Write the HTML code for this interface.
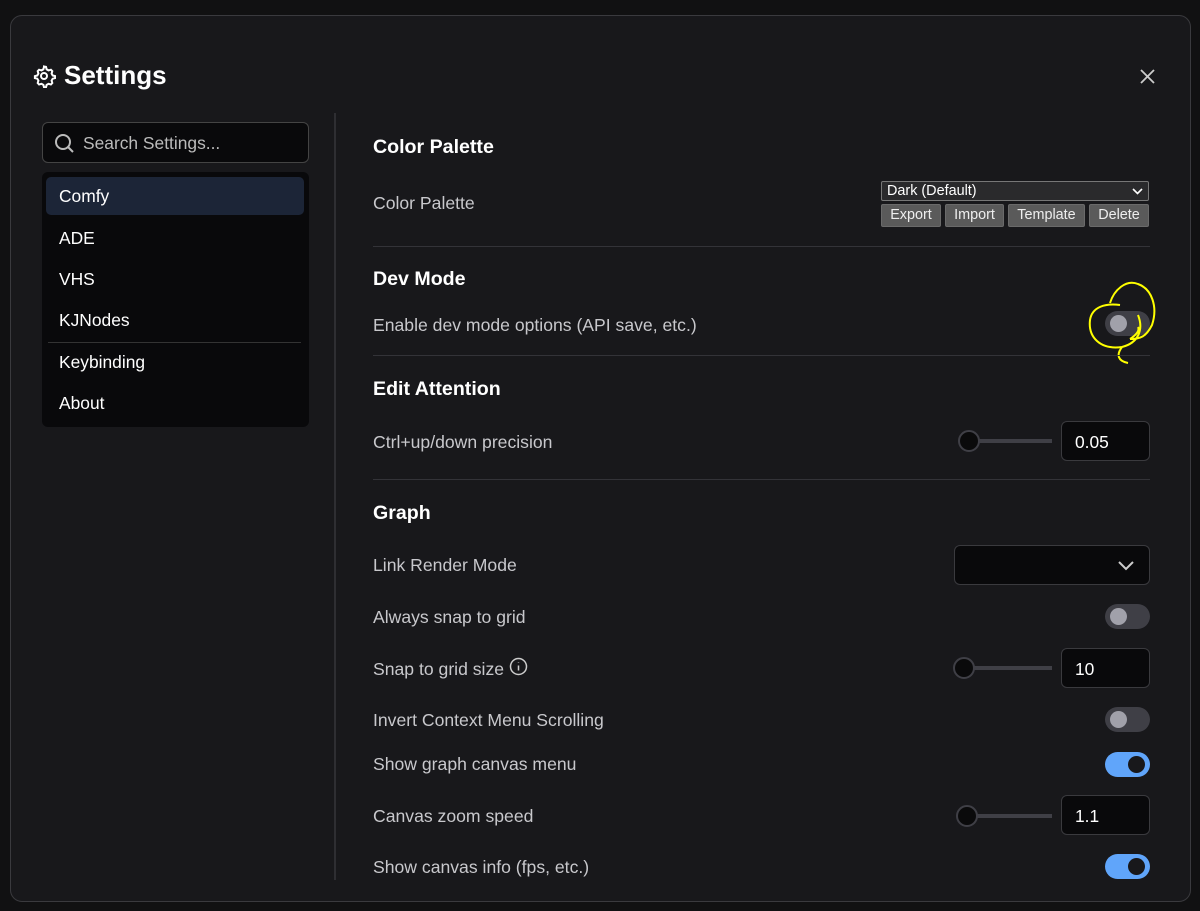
<!DOCTYPE html>
<html><head><style>
*{box-sizing:border-box;margin:0;padding:0}
body{width:1200px;height:911px;background:#111112;font-family:"Liberation Sans",sans-serif;position:relative;overflow:hidden}
.a{position:absolute}
.dlg{left:10px;top:15px;width:1181px;height:887px;background:#18181b;border:1px solid #3a3a3e;border-radius:12px}
.lbl{position:absolute;left:373px;color:#c8c8cc;font-size:17.6px}
.h{position:absolute;left:373px;color:#fff;font-size:19.6px;font-weight:bold}
.hr{position:absolute;left:373px;width:777px;height:1px;background:#333338}
.nav{position:absolute;left:59px;color:#fff;font-size:17.4px}
.tog{position:absolute;left:1105px;width:45px;height:25px;border-radius:13px;background:#3f3f46}
.tog::after{content:"";position:absolute;left:5px;top:4px;width:17px;height:17px;border-radius:50%;background:#a1a1aa}
.tog.on{background:#60a5fa}
.tog.on::after{left:23px;background:#18181b}
.sl{position:absolute;height:4px;background:#3f3f46}
.kn{position:absolute;width:22px;height:22px;border-radius:50%;background:#0a0a0b;border:2px solid #3f3f46}
.inp{position:absolute;left:1061px;width:89px;height:40px;background:#09090b;border:1px solid #3a3a3e;border-radius:6px;color:#fff;font-size:17.4px;padding:10px 0 0 13px}
.btn{position:absolute;top:204px;height:23px;background:#5a5a5a;border:1px solid #6a6a6a;border-radius:2px;color:#eee;font-size:14.4px;text-align:center;line-height:21px}
</style></head><body>
<div class="a dlg"></div>
<svg class="a" style="left:32px;top:64px" width="24" height="24" viewBox="0 0 24 24" fill="none" stroke="#fff" stroke-width="2"><circle cx="12" cy="12" r="3"/><path d="M12 2.5l2 .4.6 2.4 1.9 1.1 2.4-.7 1.4 1.5-.7 2.4 1.1 1.9 2.4.6v2l-2.4.6-1.1 1.9.7 2.4-1.4 1.5-2.4-.7-1.9 1.1-.6 2.4h-2l-.6-2.4-1.9-1.1-2.4.7-1.4-1.5.7-2.4-1.1-1.9-2.4-.6v-2l2.4-.6 1.1-1.9-.7-2.4 1.4-1.5 2.4.7 1.9-1.1.6-2.4z"/></svg>
<div class="a" style="left:64px;top:60px;color:#fff;font-size:26px;font-weight:bold">Settings</div>
<svg class="a" style="left:1139px;top:68px" width="17" height="17" viewBox="0 0 17 17" stroke="#ccc" stroke-width="1.8"><path d="M2 2L15 15M15 2L2 15"/></svg>
<div class="a" style="left:42px;top:122px;width:267px;height:41px;background:#09090b;border:1px solid #444;border-radius:6px"></div>
<svg class="a" style="left:54px;top:133px" width="21" height="21" viewBox="0 0 21 21" fill="none" stroke="#bbb" stroke-width="2"><circle cx="9" cy="9" r="7"/><path d="M14 14l5 5"/></svg>
<div class="a" style="left:83px;top:133px;color:#bbb;font-size:17.4px">Search Settings...</div>
<div class="a" style="left:42px;top:172px;width:267px;height:255px;background:#09090b;border-radius:6px"></div>
<div class="a" style="left:46px;top:177px;width:258px;height:38px;background:#1c2537;border-radius:5px"></div>
<div class="nav" style="top:186px">Comfy</div>
<div class="nav" style="top:228px">ADE</div>
<div class="nav" style="top:269px">VHS</div>
<div class="nav" style="top:310px">KJNodes</div>
<div class="a" style="left:48px;top:342px;width:253px;height:1px;background:#333"></div>
<div class="nav" style="top:352px">Keybinding</div>
<div class="nav" style="top:393px">About</div>
<div class="a" style="left:334px;top:113px;width:2px;height:767px;background:#2e2e32"></div>

<div class="h" style="top:136px">Color Palette</div>
<div class="lbl" style="top:193px">Color Palette</div>
<div class="a" style="left:881px;top:181px;width:268px;height:20px;background:#2a2a2c;border:1px solid #777;border-radius:2px;color:#fff;font-size:14.4px;padding:1px 0 0 5px">Dark (Default)<svg style="position:absolute;right:5px;top:6px" width="11" height="7" viewBox="0 0 11 7" fill="none" stroke="#fff" stroke-width="1.6"><path d="M1 1l4.5 4.5L10 1"/></svg></div>
<div class="btn" style="left:881px;width:60px">Export</div>
<div class="btn" style="left:945px;width:59px">Import</div>
<div class="btn" style="left:1008px;width:77px">Template</div>
<div class="btn" style="left:1089px;width:60px">Delete</div>
<div class="hr" style="top:246px"></div>

<div class="h" style="top:268px">Dev Mode</div>
<div class="lbl" style="top:315px">Enable dev mode options (API save, etc.)</div>
<div class="tog" style="top:311px"></div>
<svg class="a" style="left:1080px;top:275px" width="85" height="95" fill="none" stroke="#ffff00" stroke-width="2"><path d="M40 30C25 28 12 32 10 45C8 62 20 75 42 72C58 68 64 55 58 40M42 72C36 80 38 86 48 88M30 28C34 15 46 4 58 9C72 14 78 32 72 50C66 62 60 64 50 64M50 64C56 60 60 56 58 52"/></svg>
<div class="hr" style="top:355px"></div>

<div class="h" style="top:378px">Edit Attention</div>
<div class="lbl" style="top:432px">Ctrl+up/down precision</div>
<div class="sl" style="left:975px;top:439px;width:77px"></div>
<div class="kn" style="left:958px;top:430px"></div>
<div class="inp" style="top:421px">0.05</div>
<div class="hr" style="top:479px"></div>

<div class="h" style="top:502px">Graph</div>
<div class="lbl" style="top:555px">Link Render Mode</div>
<div class="a" style="left:954px;top:545px;width:196px;height:40px;background:#09090b;border:1px solid #3a3a3e;border-radius:6px"></div>
<svg class="a" style="left:1118px;top:561px" width="16" height="10" viewBox="0 0 16 10" fill="none" stroke="#ccc" stroke-width="2"><path d="M1 1l7 7 7-7"/></svg>
<div class="lbl" style="top:659px">Snap to grid size</div>
<div class="lbl" style="top:607px">Always snap to grid</div>
<div class="tog" style="top:604px"></div>
<svg class="a" style="left:509px;top:657px" width="19" height="19" viewBox="0 0 19 19" fill="none" stroke="#ccc" stroke-width="1.5"><circle cx="9.5" cy="9.5" r="8"/><path d="M9.5 8.5v5M9.5 5.5v.5"/></svg>
<div class="sl" style="left:970px;top:666px;width:82px"></div>
<div class="kn" style="left:953px;top:657px"></div>
<div class="inp" style="top:648px">10</div>
<div class="lbl" style="top:710px">Invert Context Menu Scrolling</div>
<div class="tog" style="top:707px"></div>
<div class="lbl" style="top:754px">Show graph canvas menu</div>
<div class="tog on" style="top:752px"></div>
<div class="lbl" style="top:806px">Canvas zoom speed</div>
<div class="sl" style="left:973px;top:814px;width:79px"></div>
<div class="kn" style="left:956px;top:805px"></div>
<div class="inp" style="top:795px">1.1</div>
<div class="lbl" style="top:857px">Show canvas info (fps, etc.)</div>
<div class="tog on" style="top:854px"></div>
</body></html>
